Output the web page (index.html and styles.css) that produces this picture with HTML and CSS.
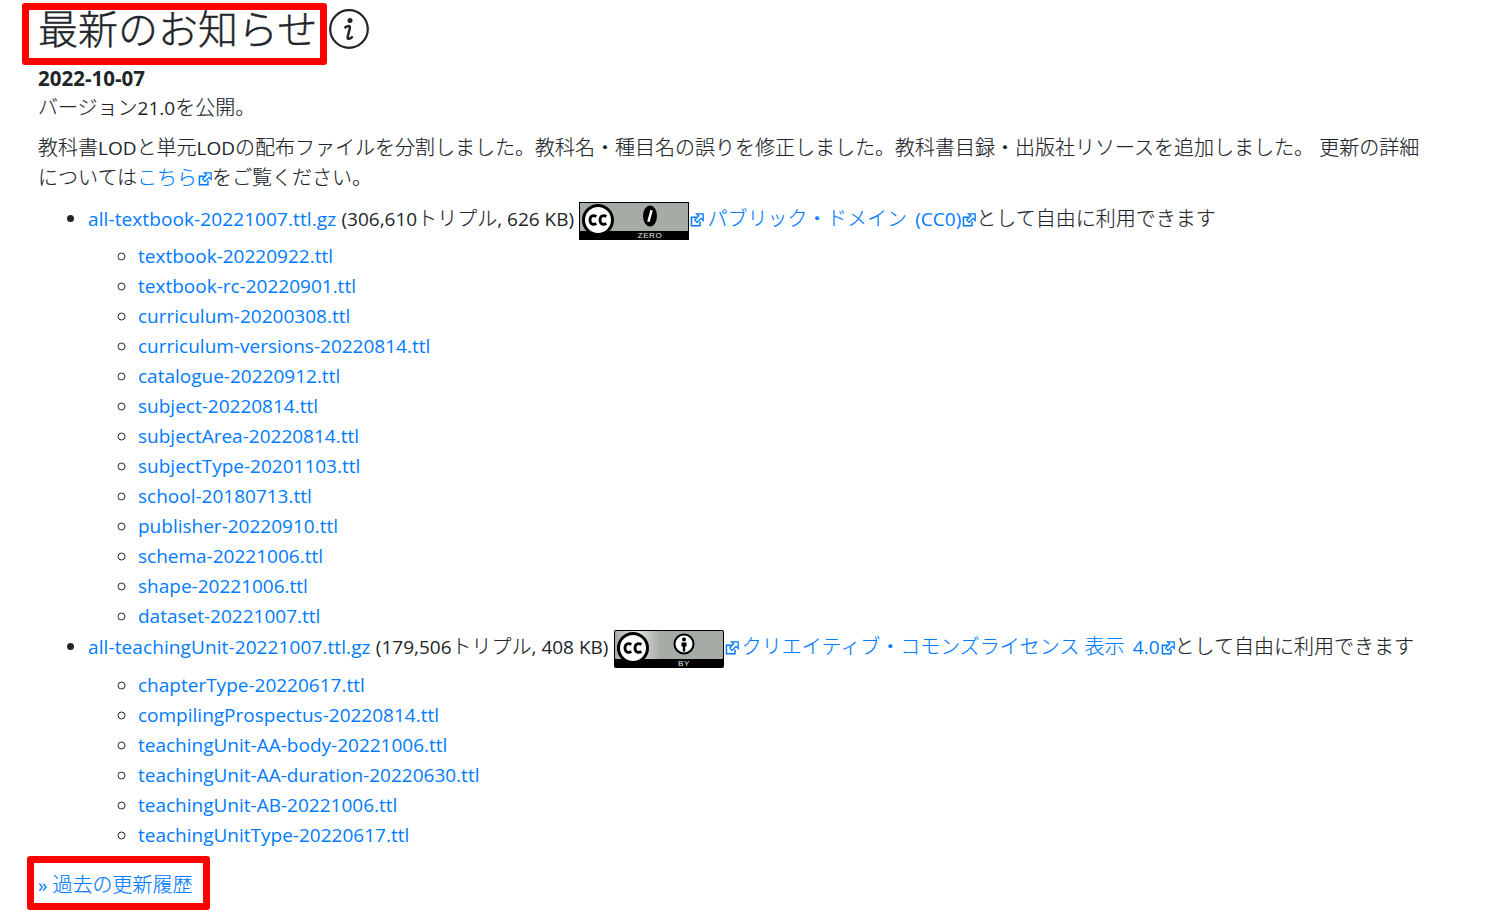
FILE: index.html
```html
<!DOCTYPE html>
<html lang="ja">
<head>
<meta charset="utf-8">
<title>最新のお知らせ</title>
<link rel="stylesheet" href="styles.css">
</head>
<body>
<svg class="defs" width="0" height="0" aria-hidden="true">
  <defs>
    <linearGradient id="sheen" x1="0" x2="1" y1="0" y2="0">
      <stop offset="0" stop-color="#a5aba5"/>
      <stop offset=".2" stop-color="#e4e6e4"/>
      <stop offset=".42" stop-color="#a5aba5"/>
    </linearGradient>
  </defs>
  <symbol id="ext" viewBox="0 0 14 14">
    <path d="M.7 3.500h6.500v1.500H2.200v7h7V8.500h1.500v5H.7z" fill="#007bff"/>
    <path d="M6.500.8h6.700v6.700l-2.200-2.100-4 4-2.400-2.400 4-4z" fill="#fff" stroke="#007bff" stroke-width="1.300"/>
  </symbol>
  <symbol id="cc" viewBox="0 0 32 32">
    <circle cx="16" cy="16" r="14.500" fill="#fff" stroke="#000" stroke-width="3"/>
    <path d="M14.300 12.700c-2.800-2.200-6.300-.8-6.300 3.300s3.500 5.500 6.300 3.300M24.300 12.700c-2.800-2.200-6.300-.8-6.300 3.300s3.500 5.500 6.300 3.300" fill="none" stroke="#000" stroke-width="2.800"/>
  </symbol>
</svg>
<main class="page">
  <div class="heading-row">
    <h2 class="title">最新のお知らせ</h2>
    <svg class="info" viewBox="0 0 40 40" aria-hidden="true">
      <circle cx="20" cy="20" r="18.800" fill="none" stroke="#212529" stroke-width="2.200"/>
      <circle cx="21" cy="11.500" r="2.500" fill="#212529"/>
      <path d="M15.500 19c2.500-2.500 6-3 5.300.3l-2.100 8.500c-.6 3 2.600 2.400 5-.3" fill="none" stroke="#212529" stroke-width="2.500"/>
    </svg>
  </div>
  <div class="date">2022-10-07</div>
  <p class="lead">バージョン<span class="lat">21.0</span>を公開。</p>
  <p class="body">教科書<span class="lat">LOD</span>と単元<span class="lat">LOD</span>の配布ファイルを分割しました。教科名・種目名の誤りを修正しました。教科書目録・出版社リソースを追加しました。 更新の詳細については<a href="#">こちら<svg class="ext"><use href="#ext"/></svg></a>をご覧ください。</p>
  <ul class="files">
    <li>
      <div class="file-line">
        <a href="#" class="lat name">all-textbook-20221007.ttl.gz</a> <span class="lat">(306,610</span>トリプル<span class="lat">, 626 KB)</span>
        <svg class="badge" viewBox="0 0 110 38" aria-hidden="true">
          <rect width="110" height="38" fill="#000"/>
          <rect x="1" y="1" width="108" height="28" fill="#a5aba5"/>
          <use href="#cc" x="3" y="2" width="32" height="32"/>
          <ellipse cx="71" cy="14" rx="7" ry="10.500" fill="#000"/>
          <path d="M71 8v12" stroke="#fff" stroke-width="2.500" transform="rotate(15 71 14)"/>
          <text x="71" y="35.500" class="tag">ZERO</text>
        </svg><svg class="ext tight"><use href="#ext"/></svg>
        <a href="#">パブリック・ドメイン <span class="lat wide">(CC0)</span><svg class="ext"><use href="#ext"/></svg></a>として自由に利用できます
      </div>
      <ul class="sub">
        <li><a href="#">textbook-20220922.ttl</a></li>
        <li><a href="#">textbook-rc-20220901.ttl</a></li>
        <li><a href="#">curriculum-20200308.ttl</a></li>
        <li><a href="#">curriculum-versions-20220814.ttl</a></li>
        <li><a href="#">catalogue-20220912.ttl</a></li>
        <li><a href="#">subject-20220814.ttl</a></li>
        <li><a href="#">subjectArea-20220814.ttl</a></li>
        <li><a href="#">subjectType-20201103.ttl</a></li>
        <li><a href="#">school-20180713.ttl</a></li>
        <li><a href="#">publisher-20220910.ttl</a></li>
        <li><a href="#">schema-20221006.ttl</a></li>
        <li><a href="#">shape-20221006.ttl</a></li>
        <li><a href="#">dataset-20221007.ttl</a></li>
      </ul>
    </li>
    <li>
      <div class="file-line">
        <a href="#" class="lat name">all-teachingUnit-20221007.ttl.gz</a> <span class="lat">(179,506</span>トリプル<span class="lat">, 408 KB)</span>
        <svg class="badge" viewBox="0 0 110 38" aria-hidden="true">
          <rect width="110" height="38" rx="2" fill="#000"/>
          <rect x="1" y="1" width="108" height="28" rx="1" fill="url(#sheen)"/>
          <use href="#cc" x="3" y="2" width="32" height="32"/>
          <circle cx="70" cy="14" r="9.500" fill="#fff" stroke="#000" stroke-width="2"/>
          <circle cx="70" cy="9.500" r="2" fill="#000"/>
          <path d="M67.500 12.500h5v4h-1.300v5h-2.400v-5h-1.300z" fill="#000"/>
          <text x="70" y="35.500" class="tag">BY</text>
        </svg><svg class="ext tight"><use href="#ext"/></svg>
        <a href="#">クリエイティブ・コモンズライセンス 表示 <span class="lat wide">4.0</span><svg class="ext"><use href="#ext"/></svg></a>として自由に利用できます
      </div>
      <ul class="sub">
        <li><a href="#">chapterType-20220617.ttl</a></li>
        <li><a href="#">compilingProspectus-20220814.ttl</a></li>
        <li><a href="#">teachingUnit-AA-body-20221006.ttl</a></li>
        <li><a href="#">teachingUnit-AA-duration-20220630.ttl</a></li>
        <li><a href="#">teachingUnit-AB-20221006.ttl</a></li>
        <li><a href="#">teachingUnitType-20220617.ttl</a></li>
      </ul>
    </li>
  </ul>
  <div class="history"><a href="#"><span class="lat">»</span> 過去の更新履歴</a></div>
</main>
</body>
</html>
```

FILE: styles.css
```css
html, body { margin: 0; padding: 0; background: #fff; }
body {
  font-family: "Open Sans", "Noto Sans CJK JP", sans-serif;
  font-size: 20px;
  font-weight: 300;
  line-height: 30px;
  color: #212529;
  height: 917px;
  overflow: hidden;
  -webkit-text-stroke: .15px;
}
a { color: #007bff; text-decoration: none; }
.lat { font-size: 19px; font-weight: 400; -webkit-text-stroke: 0; }
.name { letter-spacing: .1px; }
.wide { margin-left: 3px; }
.defs { position: absolute; }
.page { padding: 3px 0 0 22px; width: 1410px; }
.heading-row { display: flex; align-items: center; gap: 2px; }
.title {
  margin: 0;
  font-family: "Noto Sans CJK JP", sans-serif;
  font-weight: 300;
  font-size: 40px;
  line-height: 34px;
  border: 7px solid #f00;
  border-radius: 3px;
  padding: 0 3px 14px 9px;
  -webkit-text-stroke: .4px;
}
.info { width: 40px; height: 40px; margin-top: -10px; }
.date { margin: -1px 0 0 16px; font-size: 20.500px; font-weight: 700; line-height: 29px; -webkit-text-stroke: 0; }
.lead { margin: 0 0 10px 16px; }
.body { margin: 0 0 10px 16px; }
.files { margin: 0; padding: 0 0 0 66px; list-style: disc; }
.file-line { line-height: 32px; padding-bottom: 6px; }
.files > li + li .file-line { padding-bottom: 7px; }
.sub { margin: 0; padding: 0 0 0 50px; list-style: circle; font-size: 19px; font-weight: 400; line-height: 30px; -webkit-text-stroke: 0; }
.badge { width: 110px; height: 38px; vertical-align: middle; margin: -6px 0 -6px 0; -webkit-text-stroke: 0; }
.tag { font: 400 8px "Liberation Sans", sans-serif; fill: #e8e8e8; text-anchor: middle; letter-spacing: .6px; }
.ext { width: 14px; height: 14px; vertical-align: -1px; margin: 0 0 0 1px; }
.tight { margin-right: -2px; }
.history {
  display: inline-block;
  border: 7px solid #f00;
  border-radius: 3px;
  margin: 6px 0 0 5px;
  padding: 4px 10px 0 4px;
  line-height: 36px;
}
```
